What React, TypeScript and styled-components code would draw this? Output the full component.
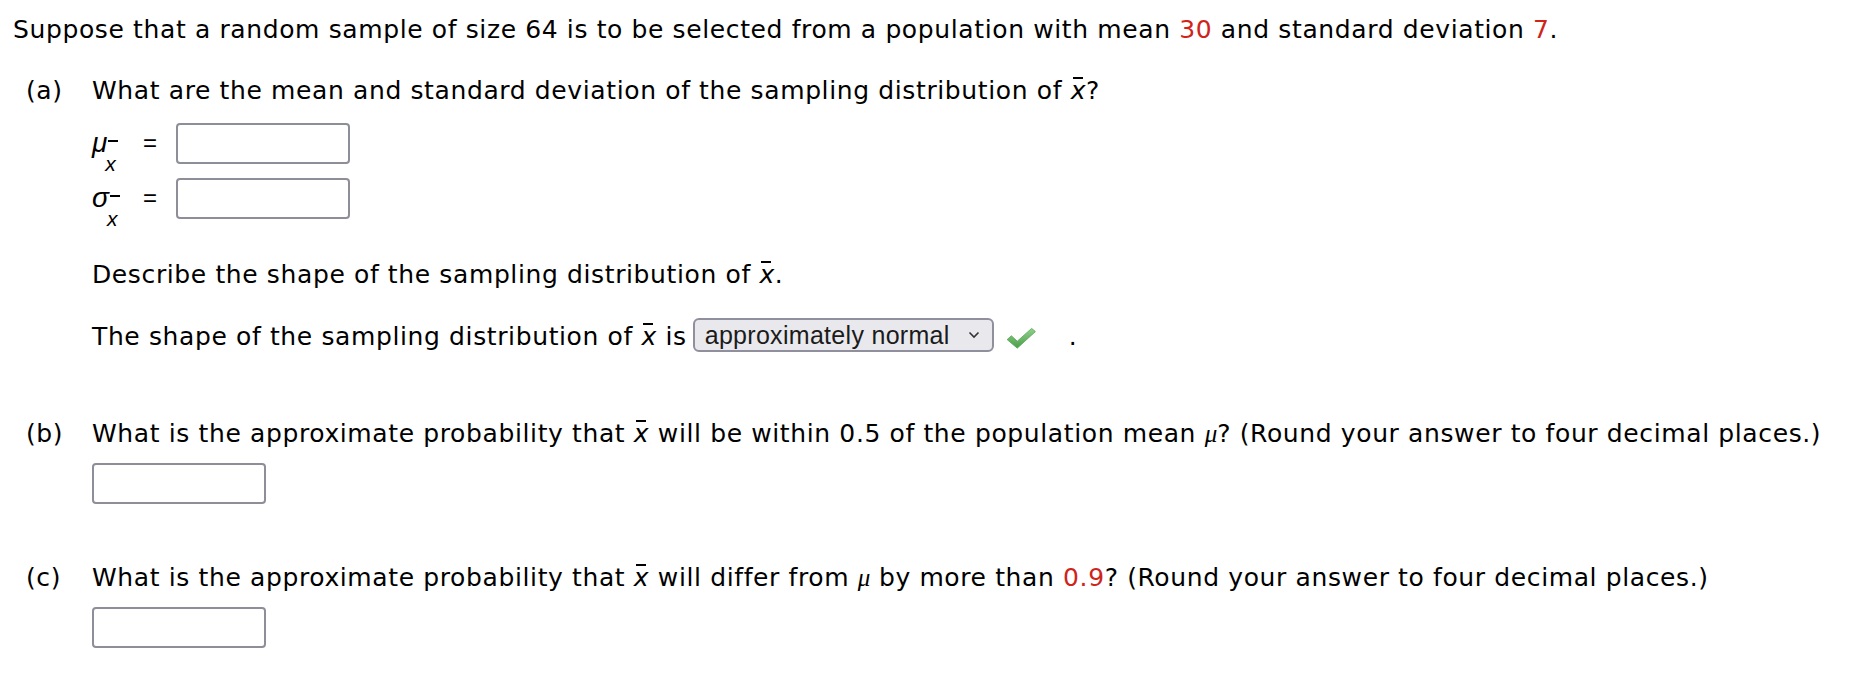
import React from 'react'
import styled, { createGlobalStyle } from 'styled-components'

const GlobalStyle = createGlobalStyle`
  html, body {
    margin: 0;
    padding: 0;
    background: #ffffff;
  }
  body {
    font-family: "DejaVu Sans", Verdana, sans-serif;
    color: #000000;
  }
`

const Page = styled.div`
  padding: 15px 0 0 13px;
  font-size: 25px;
  letter-spacing: 0.62px;
  line-height: 30px;
`

const Line = styled.p<{ $top?: number }>`
  margin: ${({ $top }) => $top || 0}px 0 0;
  white-space: nowrap;
`

const Red = styled.span`
  color: #d0241b;
`

const Part = styled.section<{ $top: number }>`
  display: grid;
  grid-template-columns: 66px 1fr;
  margin-top: ${({ $top }) => $top}px;
  padding-left: 13px;
`

const PartLabel = styled.div`
  white-space: nowrap;
`

const PartBody = styled.div`
  display: flex;
  flex-direction: column;
  align-items: flex-start;
`

const XBar = styled.span`
  position: relative;
  display: inline-block;
  font-style: italic;
  &::before {
    content: '';
    position: absolute;
    left: 2px;
    width: 10px;
    top: 1px;
    height: 2px;
    background: currentColor;
  }
`

const Mu = styled.span`
  font-family: "Liberation Serif", "Times New Roman", serif;
  font-style: italic;
  letter-spacing: 0;
`

const AnswerGrid = styled.div`
  display: grid;
  grid-template-columns: 84px 174px;
  grid-auto-rows: 41px;
  row-gap: 14px;
  margin-top: 17px;
`

const SingleAnswer = styled.div`
  margin-top: 14px;
`

const SymLabel = styled.div`
  display: flex;
  align-items: flex-start;
  padding-right: 19px;
  font-family: "Liberation Sans", Arial, sans-serif;
  letter-spacing: 0;
`

const Sym = styled.span`
  font-style: italic;
  font-size: 28px;
  line-height: 28px;
  margin-top: 6px;
`

const SubX = styled.span`
  display: inline-flex;
  flex-direction: column;
  align-items: flex-start;
  margin: 17px 0 0 1px;
`

const SubBar = styled.span`
  width: 10px;
  height: 2px;
  background: currentColor;
`

const SubLetter = styled.span`
  font-style: italic;
  font-size: 21px;
  line-height: 20px;
  margin: 12px 0 0 -3px;
`

const Equals = styled.span`
  margin: 5px 0 0 auto;
  font-size: 24px;
  line-height: 30px;
`

const AnswerBox = styled.div`
  width: 174px;
  height: 41px;
  box-sizing: border-box;
  border: 2px solid #8e8e99;
  border-radius: 4px;
  background: #ffffff;
`

const ShapeRow = styled.div`
  display: flex;
  align-items: center;
  height: 34px;
  margin-top: 28px;
  white-space: nowrap;
`

const ShapeText = styled.span`
  padding-top: 4px;
`

const Select = styled.div`
  display: flex;
  align-items: center;
  justify-content: space-between;
  width: 301px;
  height: 34px;
  box-sizing: border-box;
  margin-left: 6px;
  padding: 0 12px 0 10px;
  border: 2px solid #8f8f9d;
  border-radius: 6px;
  background: #e9e9ed;
  font-family: "Liberation Sans", Arial, sans-serif;
  font-size: 25px;
  letter-spacing: 0.3px;
  color: #1b1b1b;
`

const CheckMark = styled.svg`
  margin-left: 11px;
  margin-top: 6px;
`

const Period = styled.span`
  margin-left: 32px;
  padding-top: 4px;
`

const Chevron = () => (
  <svg width="12" height="8" viewBox="0 0 12 8">
    <path d="M1.5 1.5 L6 6 L10.5 1.5" fill="none" stroke="#333" strokeWidth="1.6" />
  </svg>
)

const Check = () => (
  <CheckMark width="32" height="26" viewBox="0 0 30 24">
    <defs>
      <linearGradient id="chk" x1="0" y1="0" x2="0" y2="1">
        <stop offset="0" stopColor="#8fd08c" />
        <stop offset="1" stopColor="#4c9e49" />
      </linearGradient>
    </defs>
    <path
      d="M2 13.5 L6 10 L11.5 15 L25 3 L28.5 6 L11.5 21.5 Z"
      fill="url(#chk)"
      stroke="#5aa957"
      strokeWidth="0.8"
      strokeLinejoin="round"
    />
  </CheckMark>
)

const Xb = () => <XBar>x</XBar>

const SampleSymbol = ({ symbol }: { symbol: string }) => (
  <SymLabel>
    <Sym>{symbol}</Sym>
    <SubX>
      <SubBar />
      <SubLetter>x</SubLetter>
    </SubX>
    <Equals>=</Equals>
  </SymLabel>
)

export default function App() {
  return (
    <Page>
      <GlobalStyle />
      <Line>
        Suppose that a random sample of size 64 is to be selected from a population with mean <Red>30</Red> and standard
        deviation <Red>7</Red>.
      </Line>

      <Part $top={31}>
        <PartLabel>(a)</PartLabel>
        <PartBody>
          <Line>
            What are the mean and standard deviation of the sampling distribution of <Xb />?
          </Line>
          <AnswerGrid>
            <SampleSymbol symbol="μ" />
            <AnswerBox />
            <SampleSymbol symbol="σ" />
            <AnswerBox />
          </AnswerGrid>
          <Line $top={41}>
            Describe the shape of the sampling distribution of <Xb />.
          </Line>
          <ShapeRow>
            <ShapeText>
              The shape of the sampling distribution of <Xb /> is
            </ShapeText>
            <Select>
              <span>approximately normal</span>
              <Chevron />
            </Select>
            <Check />
            <Period>.</Period>
          </ShapeRow>
        </PartBody>
      </Part>

      <Part $top={67}>
        <PartLabel>(b)</PartLabel>
        <PartBody>
          <Line>
            What is the approximate probability that <Xb /> will be within 0.5 of the population mean <Mu>μ</Mu>? (Round
            your answer to four decimal places.)
          </Line>
          <SingleAnswer>
            <AnswerBox />
          </SingleAnswer>
        </PartBody>
      </Part>

      <Part $top={59}>
        <PartLabel>(c)</PartLabel>
        <PartBody>
          <Line>
            What is the approximate probability that <Xb /> will differ from <Mu>μ</Mu> by more than <Red>0.9</Red>?
            (Round your answer to four decimal places.)
          </Line>
          <SingleAnswer>
            <AnswerBox />
          </SingleAnswer>
        </PartBody>
      </Part>
    </Page>
  )
}
